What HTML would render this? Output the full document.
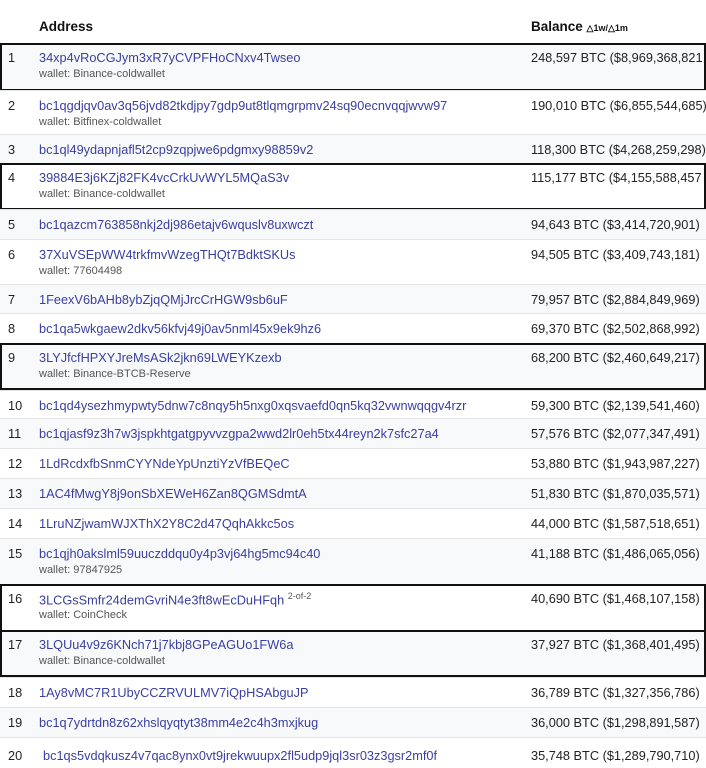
<!DOCTYPE html>
<html><head><style>
body{margin:0;width:706px;height:768px;overflow:hidden;background:#fff;font-family:"Liberation Sans",Arial,sans-serif;font-size:12.75px;color:#222;position:relative}
.h{position:absolute;top:19px;font-weight:bold;font-size:13.5px;color:#111}
.r{position:absolute;left:0;width:706px;box-sizing:border-box;border-top:1px solid #e4e4e4}
.r.g{background:#f8f9fa}
.r.b{border:2px solid #111;}
.n{position:absolute;left:8px;top:7px}
.a{position:absolute;left:39px;top:7px;color:#3a3fa0;white-space:nowrap}
.w{position:absolute;left:39px;top:25px;font-size:11px;color:#555}
.v{position:absolute;left:531px;top:7px;white-space:nowrap}
.b .n{left:6px;top:5px}.b .a{left:37px;top:5px}.b .w{left:37px;top:23px}.b .v{left:529px;top:5px}
sup{font-size:9px;color:#555}
</style></head><body>
<div class="h" style="left:39px">Address</div>
<div class="h" style="left:531px">Balance <span style="font-size:9px;font-weight:bold">△1w/△1m</span></div>

<div class="r g b" style="top:43px;height:48px"><span class="n">1</span><span class="a">34xp4vRoCGJym3xR7yCVPFHoCNxv4Twseo</span><span class="w">wallet: Binance-coldwallet</span><span class="v">248,597 BTC ($8,969,368,821</span></div>
<div class="r" style="top:90px;height:44px"><span class="n">2</span><span class="a">bc1qgdjqv0av3q56jvd82tkdjpy7gdp9ut8tlqmgrpmv24sq90ecnvqqjwvw97</span><span class="w">wallet: Bitfinex-coldwallet</span><span class="v">190,010 BTC ($6,855,544,685)</span></div>
<div class="r g" style="top:134px;height:30px"><span class="n">3</span><span class="a">bc1ql49ydapnjafl5t2cp9zqpjwe6pdgmxy98859v2</span><span class="v">118,300 BTC ($4,268,259,298)</span></div>
<div class="r b" style="top:163px;height:47px"><span class="n">4</span><span class="a">39884E3j6KZj82FK4vcCrkUvWYL5MQaS3v</span><span class="w">wallet: Binance-coldwallet</span><span class="v">115,177 BTC ($4,155,588,457</span></div>
<div class="r g" style="top:209px;height:30px"><span class="n">5</span><span class="a">bc1qazcm763858nkj2dj986etajv6wquslv8uxwczt</span><span class="v">94,643 BTC ($3,414,720,901)</span></div>
<div class="r" style="top:239px;height:45px"><span class="n">6</span><span class="a">37XuVSEpWW4trkfmvWzegTHQt7BdktSKUs</span><span class="w">wallet: 77604498</span><span class="v">94,505 BTC ($3,409,743,181)</span></div>
<div class="r g" style="top:284px;height:29px"><span class="n">7</span><span class="a">1FeexV6bAHb8ybZjqQMjJrcCrHGW9sb6uF</span><span class="v">79,957 BTC ($2,884,849,969)</span></div>
<div class="r" style="top:313px;height:30px"><span class="n">8</span><span class="a">bc1qa5wkgaew2dkv56kfvj49j0av5nml45x9ek9hz6</span><span class="v">69,370 BTC ($2,502,868,992)</span></div>
<div class="r g b" style="top:343px;height:47px"><span class="n">9</span><span class="a">3LYJfcfHPXYJreMsASk2jkn69LWEYKzexb</span><span class="w">wallet: Binance-BTCB-Reserve</span><span class="v">68,200 BTC ($2,460,649,217)</span></div>
<div class="r" style="top:390px;height:28px"><span class="n">10</span><span class="a">bc1qd4ysezhmypwty5dnw7c8nqy5h5nxg0xqsvaefd0qn5kq32vwnwqqgv4rzr</span><span class="v">59,300 BTC ($2,139,541,460)</span></div>
<div class="r g" style="top:418px;height:30px"><span class="n">11</span><span class="a">bc1qjasf9z3h7w3jspkhtgatgpyvvzgpa2wwd2lr0eh5tx44reyn2k7sfc27a4</span><span class="v">57,576 BTC ($2,077,347,491)</span></div>
<div class="r" style="top:448px;height:30px"><span class="n">12</span><span class="a">1LdRcdxfbSnmCYYNdeYpUnztiYzVfBEQeC</span><span class="v">53,880 BTC ($1,943,987,227)</span></div>
<div class="r g" style="top:478px;height:30px"><span class="n">13</span><span class="a">1AC4fMwgY8j9onSbXEWeH6Zan8QGMSdmtA</span><span class="v">51,830 BTC ($1,870,035,571)</span></div>
<div class="r" style="top:508px;height:30px"><span class="n">14</span><span class="a">1LruNZjwamWJXThX2Y8C2d47QqhAkkc5os</span><span class="v">44,000 BTC ($1,587,518,651)</span></div>
<div class="r g" style="top:538px;height:46px"><span class="n">15</span><span class="a">bc1qjh0akslml59uuczddqu0y4p3vj64hg5mc94c40</span><span class="w">wallet: 97847925</span><span class="v">41,188 BTC ($1,486,065,056)</span></div>
<div class="r b" style="top:584px;height:48px"><span class="n">16</span><span class="a">3LCGsSmfr24demGvriN4e3ft8wEcDuHFqh <sup>2-of-2</sup></span><span class="w">wallet: CoinCheck</span><span class="v">40,690 BTC ($1,468,107,158)</span></div>
<div class="r g b" style="top:630px;height:47px"><span class="n">17</span><span class="a">3LQUu4v9z6KNch71j7kbj8GPeAGUo1FW6a</span><span class="w">wallet: Binance-coldwallet</span><span class="v">37,927 BTC ($1,368,401,495)</span></div>
<div class="r" style="top:677px;height:30px"><span class="n">18</span><span class="a">1Ay8vMC7R1UbyCCZRVULMV7iQpHSAbguJP</span><span class="v">36,789 BTC ($1,327,356,786)</span></div>
<div class="r g" style="top:707px;height:30px"><span class="n">19</span><span class="a">bc1q7ydrtdn8z62xhslqyqtyt38mm4e2c4h3mxjkug</span><span class="v">36,000 BTC ($1,298,891,587)</span></div>
<div class="r" style="top:737px;height:31px"><span class="n" style="top:10px">20</span><span class="a" style="left:43px;top:10px">bc1qs5vdqkusz4v7qac8ynx0vt9jrekwuupx2fl5udp9jql3sr03z3gsr2mf0f</span><span class="v" style="top:10px">35,748 BTC ($1,289,790,710)</span></div>
</body></html>
